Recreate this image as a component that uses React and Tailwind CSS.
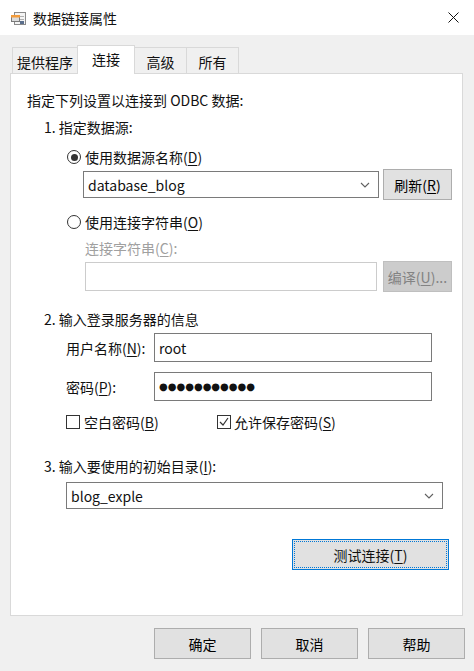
import React from 'react'

/* ─── small widgets ─────────────────────────────────────────────────── */

const Key = ({ children }) => <span className="underline underline-offset-[2px]">{children}</span>

function Chevron() {
  return (
    <svg width="10" height="6" viewBox="0 0 10 6" className="shrink-0">
      <polyline points="1,1 5,5 9,1" fill="none" stroke="#606060" strokeWidth="1.1" />
    </svg>
  )
}

function Radio({ checked }) {
  return (
    <span className="w-[14px] h-[14px] rounded-full border border-[#333] bg-white flex items-center justify-center shrink-0">
      {checked && <span className="w-[7px] h-[7px] rounded-full bg-[#333]" />}
    </span>
  )
}

function Check({ checked }) {
  return (
    <span className="w-[14px] h-[14px] border border-[#333] bg-white flex items-center justify-center shrink-0">
      {checked && (
        <svg width="12" height="12" viewBox="0 0 12 12">
          <polyline points="2,6 5,9 10,2" fill="none" stroke="#333" strokeWidth="1.2" />
        </svg>
      )}
    </span>
  )
}

function Button({ children, className = '', disabled }) {
  return (
    <div
      className={`h-[31px] flex items-center justify-center border ${
        disabled ? 'bg-[#cccccc] border-[#bfbfbf] text-[#838383]' : 'bg-[#e1e1e1] border-[#adadad] text-black'
      } ${className}`}
    >
      {children}
    </div>
  )
}

function WindowIcon() {
  return (
    <svg width="17" height="16" viewBox="0 0 17 16">
      <rect x="4.5" y="2.5" width="11" height="12" fill="#f4f4f4" stroke="#8a8a8a" />
      <rect x="6" y="6" width="8" height="1" fill="#b0b0b0" />
      <rect x="6" y="9" width="8" height="1" fill="#b0b0b0" />
      <rect x="1.5" y="5.5" width="8" height="6" fill="#dcdcdc" stroke="#7a7a7a" />
      <rect x="1" y="5" width="9" height="2.5" fill="#f39c3c" />
      <rect x="10" y="11" width="4" height="3" fill="#5a6e8c" />
    </svg>
  )
}

/* ─── tabs ──────────────────────────────────────────────────────────── */

const tabs = [
  { label: '提供程序', w: 'w-[66px]' },
  { label: '连接', w: 'w-[58px]', active: true },
  { label: '高级', w: 'w-[53px]' },
  { label: '所有', w: 'w-[53px]' },
]

export default function App() {
  return (
    <div
      className="w-[474px] h-[671px] bg-[#f0f0f0] flex flex-col text-[14px] leading-[20px] text-[#111] overflow-hidden"
      style={{ fontFamily: '"Noto Sans CJK SC", "Noto Sans", sans-serif' }}
    >
      {/* Title bar */}
      <div className="h-[35px] bg-white flex items-center pl-[10px] pr-[15px] shrink-0">
        <WindowIcon />
        <span className="ml-[6px] text-[14px]">数据链接属性</span>
        <svg width="11" height="11" viewBox="0 0 11 11" className="ml-auto">
          <path d="M0.5 0.5 L10.5 10.5 M10.5 0.5 L0.5 10.5" stroke="#111" strokeWidth="1" />
        </svg>
      </div>

      {/* Tabs */}
      <div className="flex items-end h-[38px] pl-[12px]">
        {tabs.map((t, i) => (
          <div
            key={t.label}
            className={`${t.w} ${i > 0 ? '-ml-px' : ''} border border-b-0 border-[#d9d9d9] flex justify-center ${
              t.active
                ? 'h-[29px] bg-white relative z-10 -mb-px pt-[3px]'
                : 'h-[26px] bg-[#f0f0f0] pt-[4px]'
            }`}
          >
            {t.label}
          </div>
        ))}
      </div>

      {/* Panel */}
      <div className="ml-[10px] w-[453px] h-[543px] bg-white border border-[#d9d9d9] pl-[16px] pt-[16px] flex flex-col shrink-0">
        <div>指定下列设置以连接到 ODBC 数据:</div>

        <div className="mt-[7px] ml-[17px]">1. 指定数据源:</div>

        <div className="mt-[10px] ml-[40px] flex items-center gap-[4px]">
          <Radio checked />
          <span>
            使用数据源名称(<Key>D</Key>)
          </span>
        </div>

        <div className="mt-[2px] ml-[56px] flex items-center gap-[4px]">
          <div className="w-[296px] h-[27px] border border-[#7a7a7a] flex items-center pl-[4px] pr-[8px]">
            <span className="flex-1">database_blog</span>
            <Chevron />
          </div>
          <Button className="w-[69px]">
            刷新(<Key>R</Key>)
          </Button>
        </div>

        <div className="mt-[12px] ml-[40px] flex items-center gap-[4px]">
          <Radio />
          <span>
            使用连接字符串(<Key>O</Key>)
          </span>
        </div>

        <div className="mt-[6px] ml-[58px] text-[#a0a0a0]">
          连接字符串(<Key>C</Key>):
        </div>

        <div className="mt-[3px] ml-[58px] flex items-center gap-[6px]">
          <div className="w-[292px] h-[29px] border border-[#cccccc] bg-white" />
          <Button disabled className="w-[69px]">
            编译(<Key>U</Key>)...
          </Button>
        </div>

        <div className="mt-[17px] ml-[17px]">2. 输入登录服务器的信息</div>

        <div className="mt-[4px] ml-[39px] flex items-center">
          <span className="w-[88px]">
            用户名称(<Key>N</Key>):
          </span>
          <div className="w-[278px] h-[29px] border border-[#7a7a7a] flex items-center pl-[4px]">root</div>
        </div>

        <div className="mt-[10px] ml-[39px] flex items-center">
          <span className="w-[88px]">
            密码(<Key>P</Key>):
          </span>
          <div className="w-[278px] h-[29px] border border-[#7a7a7a] flex items-center pl-[4px]">
            <span className="text-[10px] tracking-[0px]" style={{ fontFamily: '"DejaVu Sans", sans-serif' }}>
              ●●●●●●●●●●●
            </span>
          </div>
        </div>

        <div className="mt-[11px] ml-[39px] flex items-center">
          <div className="w-[151px] flex items-center gap-[4px]">
            <Check />
            <span>
              空白密码(<Key>B</Key>)
            </span>
          </div>
          <div className="flex items-center gap-[3px]">
            <Check checked />
            <span>
              允许保存密码(<Key>S</Key>)
            </span>
          </div>
        </div>

        <div className="mt-[24px] ml-[17px]">
          3. 输入要使用的初始目录(<Key>I</Key>):
        </div>

        <div className="mt-[6px] ml-[39px] w-[377px] h-[27px] border border-[#7a7a7a] flex items-center pl-[4px] pr-[8px]">
          <span className="flex-1">blog_exple</span>
          <Chevron />
        </div>

        <div className="mt-[30px] self-end mr-[13px] w-[157px] h-[31px] border border-[#0078d7] bg-[#e1e1e1] p-[1px]">
          <div className="w-full h-full border border-dotted border-[#0078d7] flex items-center justify-center">
            测试连接(<Key>T</Key>)
          </div>
        </div>
      </div>

      {/* Dialog buttons */}
      <div className="mt-[12px] flex justify-end gap-[10px] pr-[9px]">
        <Button className="w-[97px]">确定</Button>
        <Button className="w-[97px]">取消</Button>
        <Button className="w-[97px]">帮助</Button>
      </div>
    </div>
  )
}
